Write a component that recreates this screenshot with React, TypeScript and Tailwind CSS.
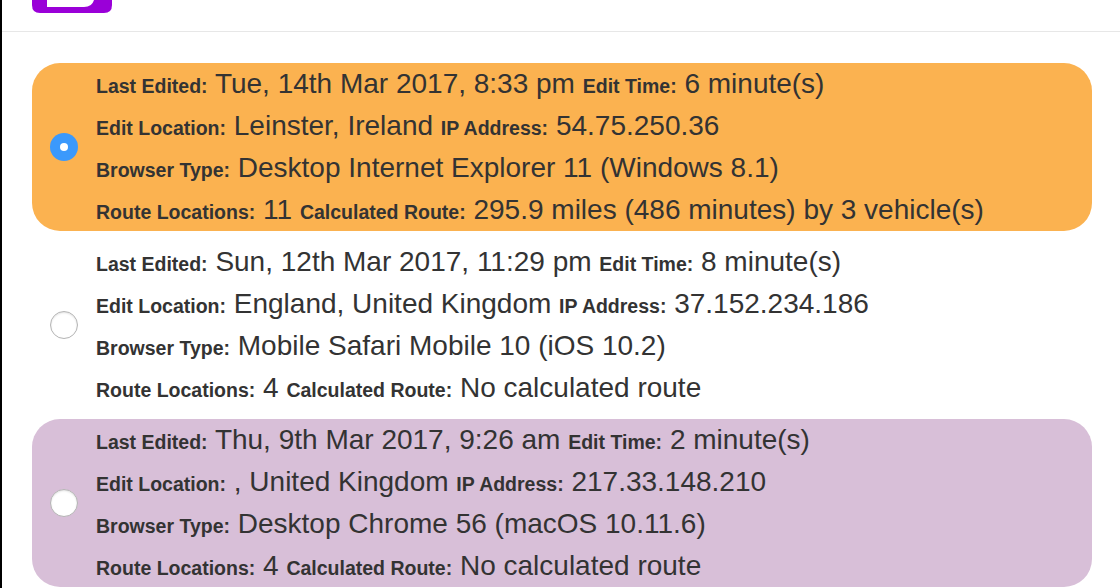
import React from 'react';

type Edit = {
  lastEdited: string;
  editTime: string;
  location: string;
  ip: string;
  browser: string;
  routeLocations: string;
  route: string;
  bg: string;
  selected?: boolean;
};

const edits: Edit[] = [
  {
    lastEdited: 'Tue, 14th Mar 2017, 8:33 pm',
    editTime: '6 minute(s)',
    location: 'Leinster, Ireland',
    ip: '54.75.250.36',
    browser: 'Desktop Internet Explorer 11 (Windows 8.1)',
    routeLocations: '11',
    route: '295.9 miles (486 minutes) by 3 vehicle(s)',
    bg: 'bg-[#fbb250]',
    selected: true,
  },
  {
    lastEdited: 'Sun, 12th Mar 2017, 11:29 pm',
    editTime: '8 minute(s)',
    location: 'England, United Kingdom',
    ip: '37.152.234.186',
    browser: 'Mobile Safari Mobile 10 (iOS 10.2)',
    routeLocations: '4',
    route: 'No calculated route',
    bg: 'bg-white',
  },
  {
    lastEdited: 'Thu, 9th Mar 2017, 9:26 am',
    editTime: '2 minute(s)',
    location: ', United Kingdom',
    ip: '217.33.148.210',
    browser: 'Desktop Chrome 56 (macOS 10.11.6)',
    routeLocations: '4',
    route: 'No calculated route',
    bg: 'bg-[#d8bfd8]',
  },
];

const Label: React.FC<{ children: React.ReactNode }> = ({ children }) => (
  <span className="text-[19.5px] font-bold">{children}</span>
);

const Radio: React.FC<{ selected?: boolean }> = ({ selected }) =>
  selected ? (
    <div className="w-[28px] h-[28px] rounded-full bg-[#3b99fc] flex items-center justify-center shrink-0">
      <div className="w-[8px] h-[8px] rounded-full bg-white" />
    </div>
  ) : (
    <div className="w-[28px] h-[28px] rounded-full bg-white border border-[#b4b4b4] shadow-[inset_0_1px_2px_rgba(0,0,0,0.12)] shrink-0" />
  );

const EditRow: React.FC<{ edit: Edit }> = ({ edit }) => (
  <div className={`${edit.bg} rounded-[28px] h-[168px] w-[1060px] flex items-center pl-[18px] gap-[18px]`}>
    <Radio selected={edit.selected} />
    <div className="flex flex-col text-[28px] text-[#333] whitespace-nowrap">
      <div className="h-[42px] leading-[42px]">
        <Label>Last Edited:</Label> {edit.lastEdited} <Label>Edit Time:</Label> {edit.editTime}
      </div>
      <div className="h-[42px] leading-[42px]">
        <Label>Edit Location:</Label> {edit.location} <Label>IP Address:</Label> {edit.ip}
      </div>
      <div className="h-[42px] leading-[42px]">
        <Label>Browser Type:</Label> {edit.browser}
      </div>
      <div className="h-[42px] leading-[42px]">
        <Label>Route Locations:</Label> {edit.routeLocations} <Label>Calculated Route:</Label> {edit.route}
      </div>
    </div>
  </div>
);

export default function App() {
  return (
    <div className="w-[1120px] h-[588px] overflow-hidden bg-white border-l-2 border-black font-['Liberation_Sans',Arial,sans-serif]">
      {/* header with cut-off logo */}
      <div className="h-[32px] border-b border-[#e7e7e7] pl-[30px]">
        <svg width="80" height="13" viewBox="0 0 80 13">
          <path d="M0 0 H80 V5 Q80 13 72 13 H8 Q0 13 0 5 Z" fill="#9a00d8" />
          <path d="M15 0 V7 H52 Q60 7 62 0 Z" fill="white" />
        </svg>
      </div>

      <div className="pt-[31px] pl-[30px] flex flex-col gap-[10px]">
        {edits.map((e, i) => (
          <EditRow key={i} edit={e} />
        ))}
      </div>
    </div>
  );
}
